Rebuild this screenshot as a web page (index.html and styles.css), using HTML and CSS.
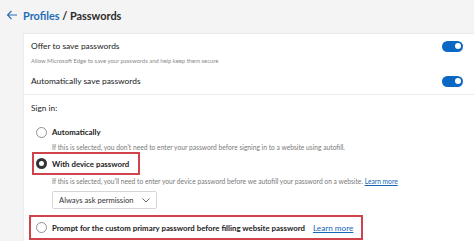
FILE: index.html
```html
<!DOCTYPE html>
<html lang="en">
<head>
<meta charset="utf-8">
<title>Profiles / Passwords</title>
<link rel="stylesheet" href="styles.css">
</head>
<body>
<header class="header">
  <svg class="back" width="12" height="10" viewBox="0 0 12 10" aria-hidden="true">
    <path d="M11 5H1.5M5.5 1L1.5 5l4 4" fill="none" stroke="#2b6cb0" stroke-width="1.1"/>
  </svg>
  <h1 class="title"><span class="crumb">Profiles</span> / Passwords</h1>
</header>
<main class="card">
  <section class="group">
    <div class="row">
      <span class="label">Offer to save passwords</span>
      <span class="toggle"><span class="knob"></span></span>
    </div>
    <p class="sub sub-first">Allow Microsoft Edge to save your passwords and help keep them secure</p>
    <div class="row row-second">
      <span class="label">Automatically save passwords</span>
      <span class="toggle"><span class="knob"></span></span>
    </div>
  </section>
  <section class="group signin">
    <p class="signin-label">Sign in:</p>
    <div class="option">
      <span class="radio"></span>
      <span class="opt-label">Automatically</span>
    </div>
    <p class="sub sub-indent">If this is selected, you don't need to enter your password before signing in to a website using autofill.</p>
    <div class="option boxed boxed-device">
      <span class="radio radio-on"></span>
      <span class="opt-label">With device password</span>
    </div>
    <p class="sub sub-indent">If this is selected, you'll need to enter your device password before we autofill your password on a website. <a class="link" href="#">Learn more</a></p>
    <div class="select">
      <span>Always ask permission</span>
      <svg class="chev" width="8" height="5" viewBox="0 0 8 5" aria-hidden="true"><path d="M0.5 0.5L4 4l3.5-3.5" fill="none" stroke="#555" stroke-width="0.9"/></svg>
    </div>
    <div class="option boxed boxed-prompt">
      <span class="radio"></span>
      <span class="opt-label">Prompt for the custom primary password before filling website password</span>
      <a class="link link-prompt" href="#">Learn more</a>
    </div>
  </section>
</main>
</body>
</html>
```

FILE: styles.css
```css
* { box-sizing: border-box; margin: 0; padding: 0; }
html, body { height: 100%; }
body {
  background: #f4f4f4;
  font-family: Lato, "Noto Sans", sans-serif;
  color: #1f1f1f;
  overflow: hidden;
}
.header {
  height: 33px;
  display: flex;
  align-items: center;
  padding-left: 6px;
  padding-bottom: 3px;
  gap: 5px;
}
.back { display: block; }
.title {
  font-size: 10.9px;
  font-weight: 700;
  color: #2a2a2a;
}
.crumb { color: #1f6cb8; }
.card {
  margin-left: 23px;
  background: #fff;
  border-top: 1px solid #e8e8e8;
  border-left: 1px solid #ececec;
  height: 220px;
}
.group { padding: 0 11px 0 7px; }
.group + .group { border-top: 1px solid #ebebeb; }
.row {
  height: 20px;
  margin-top: 2px;
  display: flex;
  align-items: center;
  justify-content: space-between;
}
.row-second { margin-top: 5px; height: 20px; margin-bottom: 3px; }
.label { font-size: 8.4px; font-weight: 400; color: #1a1a1a; }
.toggle {
  width: 21px;
  height: 11px;
  border-radius: 6px;
  background: #0a68c4;
  position: relative;
}
.knob {
  position: absolute;
  right: 2.5px;
  top: 2.5px;
  width: 6px;
  height: 6px;
  border-radius: 50%;
  background: #fff;
}
.sub {
  font-size: 6.7px;
  line-height: 10px;
  height: 10px;
  color: #7a7a7a;
  white-space: nowrap;
}
.sub-first { font-size: 5.9px; color: #8a8a8a; }
.sub-indent { margin-left: 21px; margin-top: 1px; }
.signin-label {
  font-size: 8.3px;
  line-height: 14px;
  margin-top: 6px;
}
.option {
  display: flex;
  align-items: center;
  gap: 5px;
  height: 18px;
  margin-top: 8px;
  padding-left: 5px;
}
.radio {
  width: 11px;
  height: 11px;
  border-radius: 50%;
  border: 1px solid #8f8f8f;
  flex: none;
}
.radio-on { border: 3px solid #333; }
.opt-label { font-size: 7.85px; font-weight: 700; white-space: nowrap; color: #222; }
.boxed {
  border: 2px solid #d1434b;
}
.boxed-device {
  width: 108px;
  height: 23px;
  margin-top: 0;
  margin-left: 1px;
  padding-left: 2px;
}
.boxed-prompt {
  width: 334px;
  height: 25px;
  margin-top: 6px;
  margin-left: -2px;
  padding-left: 5px;
}
.link { color: #1565b8; text-decoration: underline; white-space: nowrap; }
.link-prompt { font-size: 8.2px; font-weight: 400; margin-left: 3px; }
.select {
  margin-top: 5px;
  margin-left: 21px;
  width: 105px;
  height: 18px;
  border: 1px solid #d6d6d6;
  border-radius: 2px;
  display: flex;
  align-items: center;
  justify-content: space-between;
  padding: 0 6px 0 6px;
  font-size: 7.6px;
  color: #333;
}
.chev { display: block; }
```
